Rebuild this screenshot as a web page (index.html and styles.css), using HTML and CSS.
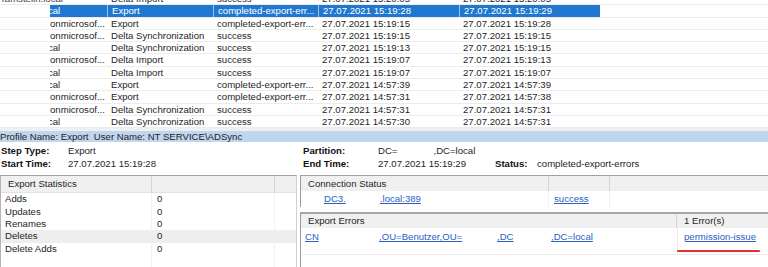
FILE: index.html
```html
<!DOCTYPE html>
<html>
<head>
<meta charset="utf-8">
<link rel="stylesheet" href="styles.css">
</head>
<body>
<div class="screen">
  <div class="list">
    <div class="row partial">
      <div class="c wide">Tamsteiln.local</div>
      <div class="c">Delta Import</div>
      <div class="c">success</div>
      <div class="c">27.07.2021 15:20:05</div>
      <div class="c">27.07.2021 15:20:05</div>
      <div class="fill"></div>
    </div>
    <div class="row sel">
      <div class="mask"></div>
      <div class="c name"><span class="cut">local</span></div>
      <div class="c">Export</div>
      <div class="c">completed-export-err...</div>
      <div class="c">27.07.2021 15:19:28</div>
      <div class="c">27.07.2021 15:19:29</div>
      <div class="fill"></div>
    </div>
    <div class="row">
      <div class="mask"></div>
      <div class="c name">onmicrosof...</div>
      <div class="c">Export</div>
      <div class="c">completed-export-err...</div>
      <div class="c">27.07.2021 15:19:15</div>
      <div class="c">27.07.2021 15:19:28</div>
      <div class="fill"></div>
    </div>
    <div class="row">
      <div class="mask"></div>
      <div class="c name">onmicrosof...</div>
      <div class="c">Delta Synchronization</div>
      <div class="c">success</div>
      <div class="c">27.07.2021 15:19:15</div>
      <div class="c">27.07.2021 15:19:15</div>
      <div class="fill"></div>
    </div>
    <div class="row">
      <div class="mask"></div>
      <div class="c name"><span class="cut">local</span></div>
      <div class="c">Delta Synchronization</div>
      <div class="c">success</div>
      <div class="c">27.07.2021 15:19:13</div>
      <div class="c">27.07.2021 15:19:15</div>
      <div class="fill"></div>
    </div>
    <div class="row">
      <div class="mask"></div>
      <div class="c name">onmicrosof...</div>
      <div class="c">Delta Import</div>
      <div class="c">success</div>
      <div class="c">27.07.2021 15:19:07</div>
      <div class="c">27.07.2021 15:19:13</div>
      <div class="fill"></div>
    </div>
    <div class="row">
      <div class="mask"></div>
      <div class="c name"><span class="cut">local</span></div>
      <div class="c">Delta Import</div>
      <div class="c">success</div>
      <div class="c">27.07.2021 15:19:07</div>
      <div class="c">27.07.2021 15:19:07</div>
      <div class="fill"></div>
    </div>
    <div class="row">
      <div class="mask"></div>
      <div class="c name"><span class="cut">local</span></div>
      <div class="c">Export</div>
      <div class="c">completed-export-err...</div>
      <div class="c">27.07.2021 14:57:39</div>
      <div class="c">27.07.2021 14:57:39</div>
      <div class="fill"></div>
    </div>
    <div class="row">
      <div class="mask"></div>
      <div class="c name">onmicrosof...</div>
      <div class="c">Export</div>
      <div class="c">completed-export-err...</div>
      <div class="c">27.07.2021 14:57:31</div>
      <div class="c">27.07.2021 14:57:38</div>
      <div class="fill"></div>
    </div>
    <div class="row">
      <div class="mask"></div>
      <div class="c name">onmicrosof...</div>
      <div class="c">Delta Synchronization</div>
      <div class="c">success</div>
      <div class="c">27.07.2021 14:57:31</div>
      <div class="c">27.07.2021 14:57:31</div>
      <div class="fill"></div>
    </div>
    <div class="row">
      <div class="mask"></div>
      <div class="c name"><span class="cut">local</span></div>
      <div class="c">Delta Synchronization</div>
      <div class="c">success</div>
      <div class="c">27.07.2021 14:57:30</div>
      <div class="c">27.07.2021 14:57:31</div>
      <div class="fill"></div>
    </div>
  </div>
  <div class="band"></div>
  <div class="profile">Profile Name: Export&nbsp; User Name: NT SERVICE\ADSync</div>
  <div class="info">
    <b class="lab">Step Type:</b><span>Export</span><b class="lab">Partition:</b><span>DC=<span class="redact"></span>,DC=local</span><span></span><span></span>
    <b class="lab">Start Time:</b><span>27.07.2021 15:19:28</span><b class="lab">End Time:</b><span>27.07.2021 15:19:29</span><b class="lab">Status:</b><span>completed-export-errors</span>
  </div>
  <div class="panels">
    <div class="stats">
      <div class="shead">
        <div class="sh">Export Statistics</div>
        <div class="sh"></div>
        <div class="sh last"></div>
      </div>
      <div class="srow"><div class="sc">Adds</div><div class="sc">0</div><div class="sc"></div></div>
      <div class="srow"><div class="sc">Updates</div><div class="sc">0</div><div class="sc"></div></div>
      <div class="srow"><div class="sc">Renames</div><div class="sc">0</div><div class="sc"></div></div>
      <div class="srow hl"><div class="sc">Deletes</div><div class="sc">0</div><div class="sc"></div></div>
      <div class="srow"><div class="sc">Delete Adds</div><div class="sc">0</div><div class="sc"></div></div>
      <div class="srow"><div class="sc"></div><div class="sc"></div><div class="sc"></div></div>
    </div>
    <div class="gutter"></div>
    <div class="right">
      <div class="conn">
        <div class="chead">
          <div class="ch">Connection Status</div>
          <div class="ch"></div>
          <div class="ch last"></div>
        </div>
        <div class="crow">
          <div class="cc first"><a class="lnk">DC3.</a><span class="gap"></span><a class="lnk">.local:389</a></div>
          <div class="cc"><a class="lnk">success</a></div>
          <div class="cc last"></div>
        </div>
      </div>
      <div class="errs">
        <div class="ehead">
          <div class="eh">Export Errors</div>
          <div class="eh last">1 Error(s)</div>
        </div>
        <div class="erow">
          <div class="ec"><a class="lnk">CN</a></div>
          <div class="ec"><a class="lnk">,OU=Benutzer,OU=</a></div>
          <div class="ec"><a class="lnk">,DC</a></div>
          <div class="ec"><a class="lnk">,DC=local</a></div>
          <div class="ec err"><a class="lnk">permission-issue</a></div>
        </div>
        <div class="mark"></div>
      </div>
    </div>
  </div>
</div>
</body>
</html>
```
FILE: styles.css
```css
html, body {
  margin: 0;
  padding: 0;
  background: #ffffff;
}
body {
  width: 768px;
  height: 267px;
  overflow: hidden;
  font-family: "Liberation Sans", Arial, sans-serif;
  font-size: 9.6px;
  color: #262626;
}
.screen {
  width: 768px;
  height: 267px;
  overflow: hidden;
}
.list {
  margin-top: -7px;
}
.row {
  display: grid;
  grid-template-columns: 50px 57px 106px 105px 141px 141px 1fr;
  height: 12.3px;
  box-sizing: border-box;
  border-bottom: 1px solid #ececec;
  line-height: 11.3px;
  white-space: nowrap;
}
.c {
  padding-left: 4px;
  overflow: hidden;
  box-sizing: border-box;
}
.c.wide {
  grid-column: span 2;
  padding-left: 0;
  color: #444;
}
.c.name {
  padding-left: 0;
}
.cut {
  display: inline-block;
  margin-left: -9.5px;
}
.mask, .fill {
  background: #ffffff;
}
.row.sel .c {
  background: #1f77d0;
  color: #ffffff;
  border-left: 1px solid rgba(255, 255, 255, 0.55);
}
.row.sel .c.name {
  border-left: none;
}
.band {
  height: 3px;
  background: #f0f0f0;
}
.profile {
  height: 11px;
  line-height: 11px;
  background: #bfd6ee;
  color: #222;
  white-space: nowrap;
}
.info {
  display: grid;
  grid-template-columns: 68px 234px 76px 116px 43px 1fr;
  grid-auto-rows: 13px;
  line-height: 13px;
  padding-top: 2px;
  height: 33px;
  box-sizing: border-box;
  white-space: nowrap;
}
.lab {
  font-weight: bold;
  color: #111;
  padding-left: 1px;
}
.redact {
  display: inline-block;
  width: 36px;
}
.panels {
  display: grid;
  grid-template-columns: 297px 3px 1fr;
  height: 95px;
}
.stats {
  border-top: 1px solid #a0a0a0;
  border-left: 1px solid #b4b4b4;
  border-right: 1px solid #d0d0d0;
  box-sizing: border-box;
}
.shead, .srow {
  display: grid;
  grid-template-columns: 151px 123px 1fr;
}
.shead {
  height: 17px;
  background: #f0f0f0;
  border-bottom: 1px solid #e2e2e2;
  box-sizing: border-box;
  line-height: 16px;
}
.sh {
  padding-left: 7px;
  border-right: 1px solid #d4d4d4;
}
.sh.last {
  border-right: none;
}
.srow {
  height: 12.4px;
  line-height: 12.4px;
}
.sc {
  padding-left: 4px;
  border-right: 1px solid #f1f1f1;
}
.sc:nth-child(2) {
  padding-left: 5px;
}
.sc:last-child {
  border-right: none;
}
.srow.hl {
  background: #eeeeee;
}
.gutter {
  background: #ffffff;
}
.right {
  display: flex;
  flex-direction: column;
}
.conn {
  border-top: 1px solid #a0a0a0;
  border-left: 1px solid #9a9a9a;
  height: 32px;
  box-sizing: border-box;
}
.chead, .crow {
  display: grid;
  grid-template-columns: 248px 61px 1fr;
}
.chead {
  height: 15px;
  line-height: 16px;
  background: #f0f0f0;
}
.ch {
  padding-left: 7px;
  border-right: 1px solid #d4d4d4;
}
.ch.last {
  border-right: none;
}
.crow {
  height: 16px;
  line-height: 16px;
}
.cc {
  padding-left: 5px;
  border-right: 1px solid #f1f1f1;
  white-space: nowrap;
}
.cc.first {
  padding-left: 23px;
}
.cc.last {
  border-right: none;
}
.gap {
  display: inline-block;
  width: 34px;
}
.lnk {
  color: #2a62c2;
  text-decoration: underline;
}
.errs {
  position: relative;
  margin-top: 5px;
  flex: 1;
  border-top: 2px solid #a6a6a6;
  border-left: 1px solid #9a9a9a;
}
.ehead {
  display: grid;
  grid-template-columns: 376px 1fr;
  height: 14px;
  line-height: 14px;
  background: #f0f0f0;
}
.eh {
  padding-left: 7px;
  border-right: 1px solid #d4d4d4;
}
.eh.last {
  border-right: none;
}
.erow {
  display: grid;
  grid-template-columns: 78px 118px 54px 126px 1fr;
  height: 27px;
  box-sizing: border-box;
  border-bottom: 1px solid #ececec;
  line-height: 13px;
  white-space: nowrap;
}
.ec {
  padding-top: 2px;
}
.ec:first-child {
  padding-left: 4px;
}
.ec.err {
  border-left: 1px solid #ececec;
  padding-left: 6px;
}
.mark {
  position: absolute;
  left: 376px;
  top: 36px;
  width: 83px;
  height: 2px;
  background: #e0302f;
  border-radius: 1px;
}
```
